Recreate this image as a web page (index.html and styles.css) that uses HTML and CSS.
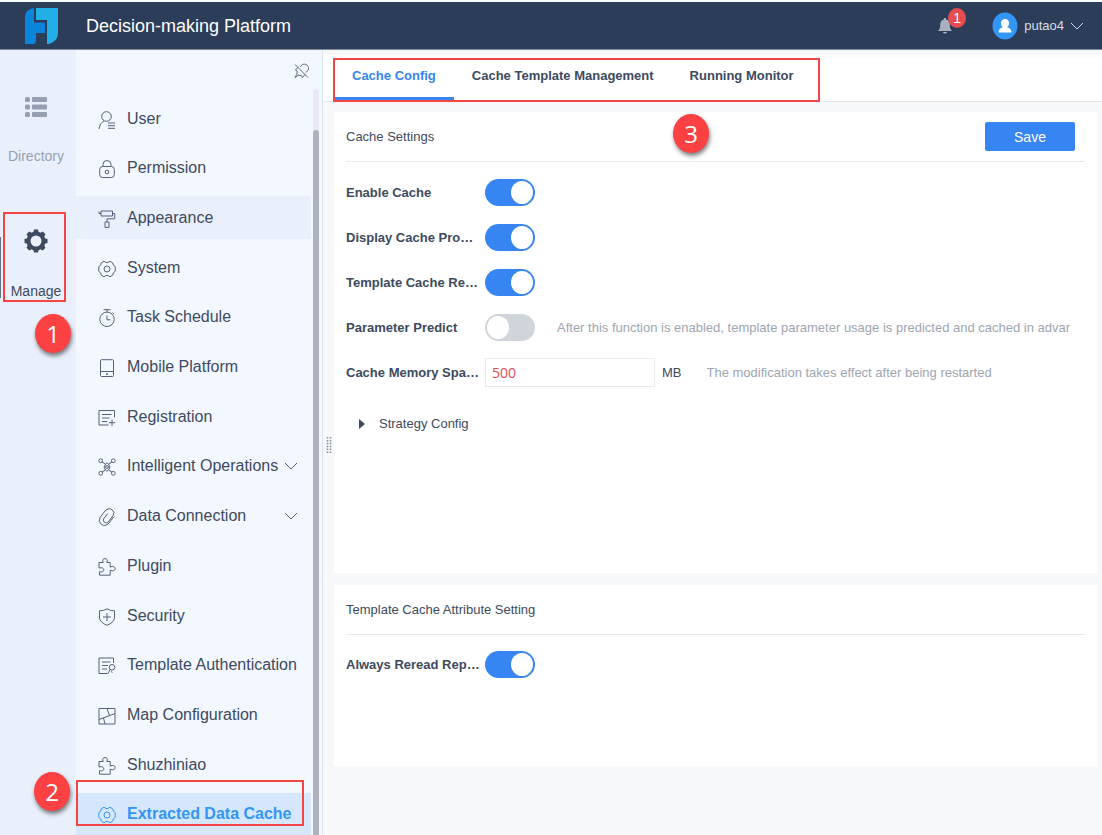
FILE: index.html
```html
<!DOCTYPE html>
<html lang="en">
<head>
<meta charset="utf-8">
<title>Decision-making Platform</title>
<link rel="stylesheet" href="styles.css">
</head>
<body>
<svg class="defs" aria-hidden="true">
  <symbol id="gear" viewBox="0 0 18 18"><path d="M6 1.200Q7.500 2.600 9 2.600T12 1.200L14.800 3Q14.600 5.400 17.200 6.600V11.400Q14.600 12.600 14.800 15L12 16.800Q10.500 15.400 9 15.400T6 16.800L3.200 15Q3.400 12.600.8 11.400V6.600Q3.400 5.400 3.200 3z"/><circle cx="9" cy="9" r="3"/></symbol>
  <symbol id="puzzle" viewBox="0 0 18 18"><path d="M1 4.500h4.200C3.900 1.900 5.300.6 7 .6s3.100 1.300 1.800 3.900h3.400v4.600c2.800-1.400 5-.3 5 1.500s-2.200 3-5 1.600v5H1.500v-3.500c3.300.8 4.300-.5 4.300-1.900S4.600 9.200 1 10z"/></symbol>
  <symbol id="down" viewBox="0 0 14 8"><path d="M1 1l6 6 6-6"/></symbol>
</svg>

<header class="topbar">
  <svg class="logo" viewBox="0 0 33 36" aria-hidden="true">
    <path d="M0 8Q1 1 9 0v14.500h11V25H11v8q0 2-2 3H0z" fill="#0b84dc"/>
    <path d="M11 0h22v25q0 8-9 11h-2V12H11z" fill="#22aee6"/>
  </svg>
  <h1 class="brand">Decision-making Platform</h1>
  <button class="bell" aria-label="Notifications">
    <svg viewBox="0 0 14 16" aria-hidden="true"><path d="M6 0h2v1.500c3 .6 3.800 2.900 3.800 5.500 0 3 .7 4.500 2.200 6H0c1.500-1.500 2.200-3 2.200-6C2.200 4.400 3 2.100 6 1.500zM5 14h4q0 1.500-2 1.500T5 14z"/></svg>
    <span class="count">1</span>
  </button>
  <button class="account">
    <svg class="avatar" viewBox="0 0 26 28" aria-hidden="true"><ellipse cx="13" cy="14" rx="12.500" ry="13.500" fill="#3296f5"/><path d="M13 7c2.800 0 4 2 4 4.200 0 1.800-.9 3.200-2 4 2.800.6 4.500 2 4.500 5.300h-13c0-3.300 1.700-4.700 4.500-5.300-1.100-.8-2-2.200-2-4C9 9 10.200 7 13 7z" fill="#fff"/></svg>
    <span>putao4</span>
    <svg class="chevron" aria-hidden="true"><use href="#down"/></svg>
  </button>
</header>

<div class="layout">
  <nav class="rail" aria-label="Sections">
    <a class="rail-item" href="#directory">
      <svg viewBox="0 0 22 22" aria-hidden="true"><g fill="currentColor"><rect y="1" width="5" height="5" rx="1.500"/><rect x="7" y="1" width="15" height="5" rx="1"/><rect y="8.500" width="5" height="5" rx="1.500"/><rect x="7" y="8.500" width="15" height="5" rx="1"/><rect y="16" width="5" height="5" rx="1.500"/><rect x="7" y="16" width="15" height="5" rx="1"/></g></svg>
      <span>Directory</span>
    </a>
    <a class="rail-item active" href="#manage">
      <svg viewBox="0 0 24 24" aria-hidden="true"><circle cx="12" cy="12" r="7.500" fill="none" stroke="currentColor" stroke-width="4"/><g fill="currentColor"><path id="tooth" d="M10 .5h4l1 4H9z"/><use href="#tooth" transform="rotate(45 12 12)"/><use href="#tooth" transform="rotate(90 12 12)"/><use href="#tooth" transform="rotate(135 12 12)"/><use href="#tooth" transform="rotate(180 12 12)"/><use href="#tooth" transform="rotate(225 12 12)"/><use href="#tooth" transform="rotate(270 12 12)"/><use href="#tooth" transform="rotate(315 12 12)"/></g></svg>
      <span>Manage</span>
    </a>
    <span class="frame frame-manage"></span>
    <span class="step step-1">1</span>
  </nav>

  <aside class="sidebar">
    <div class="pinbar">
      <button class="pin" aria-label="Unpin menu"><svg viewBox="0 0 16 16" aria-hidden="true"><path d="M1 1l14 14M4.500 3.500L1.500 7l2 1-.5 3.500L1 15l3.500-2.500 3.500.5 1 2 3-3.500M6.500 3.500l2.800-2.700q3-.8 5 1.200t1 5L12.500 9.500"/></svg></button>
    </div>
    <ul class="menu">
      <li><a href="#user"><svg viewBox="0 0 18 18"><circle cx="8.500" cy="5.500" r="4.800"/><path d="M6 9.800Q1.500 12 1 18M10 12h7M10 14.700h7M10 17.300h7"/></svg>User</a></li>
      <li><a href="#permission"><svg viewBox="0 0 18 18"><path d="M5 6.500V4.500q0-4 4-4t4 4v2"/><rect x="1.700" y="6.500" width="14.600" height="11" rx="3"/><circle cx="9" cy="12" r="1.800"/></svg>Permission</a></li>
      <li class="hover"><a href="#appearance"><svg viewBox="0 0 18 18"><path d="M3 1h11.500v5H3zM3 3.500H1V1.500M14.500 3.500h2.200v5.300H9V12M7 12h4v5.400H7z"/></svg>Appearance</a></li>
      <li><a href="#system"><svg viewBox="0 0 18 18"><use href="#gear"/></svg>System</a></li>
      <li><a href="#schedule"><svg viewBox="0 0 18 18"><circle cx="9" cy="10.300" r="7.200"/><path d="M5.500.7h7M9 .7V3M9 6.500v4.300h3.500M14.500 3.500L16 5"/></svg>Task Schedule</a></li>
      <li><a href="#mobile"><svg viewBox="0 0 18 18"><rect x="2.500" y=".7" width="13" height="16.800" rx="1"/><path d="M2.500 12.500h13"/><circle cx="9" cy="15" r=".6"/></svg>Mobile Platform</a></li>
      <li><a href="#registration"><svg viewBox="0 0 18 18"><path d="M16.500 8.500V1.500H1v14.500h9.500M4 5.500h9.500M4 9h7.500M4 12.500h5M14 10.500v6.500M11 13.700h6.300"/></svg>Registration</a></li>
      <li><a href="#operations"><svg viewBox="0 0 18 18"><circle cx="2.700" cy="2.700" r="1.900"/><circle cx="15.300" cy="2.700" r="1.900"/><circle cx="2.700" cy="15.300" r="1.900"/><circle cx="15.300" cy="15.300" r="1.900"/><circle cx="9" cy="9" r="1.400"/><path d="M4 4l3.500 2L9 4.700 10.500 6 14 4M4 14l3.500-2L9 13.300l1.500-1.300 3.500 2M7.500 6Q4.500 9 7.500 12M10.500 6q3 3 0 6"/></svg>Intelligent Operations<svg class="chevron"><use href="#down"/></svg></a></li>
      <li><a href="#connection"><svg viewBox="0 0 18 18"><path d="M16 8.500l-5 6.500q-3.800 4-7.500 1.500T2 9.500l5-6.500q3.500-3.700 7-1.300t1 6l-4.500 6q-2 2-4 .7t-.8-3.600l4-5.300"/></svg>Data Connection<svg class="chevron"><use href="#down"/></svg></a></li>
      <li><a href="#plugin"><svg viewBox="0 0 18 18"><use href="#puzzle"/></svg>Plugin</a></li>
      <li><a href="#security"><svg viewBox="0 0 18 18"><path d="M9 .8q3.500 2.200 7.500 2V10q-.5 4.500-7.500 7.300Q2 14.500 1.500 10V2.800Q5.500 3 9 .8zM9 5v8M5 9h8"/></svg>Security</a></li>
      <li><a href="#authentication"><svg viewBox="0 0 18 18"><path d="M15.500 6V1H1v15.500h8M4 5h8.500M4 8.500h6M4 12h5M12.500 12L9.500 17M13 14.500l1.500 1"/><circle cx="14" cy="10.300" r="2.800"/></svg>Template Authentication</a></li>
      <li><a href="#map"><svg viewBox="0 0 18 18"><path d="M1 1.500h16v15.500H1zM1 12.500L17 6.500M9 1.500l2.500 7M5.500 11L7 17"/></svg>Map Configuration</a></li>
      <li><a href="#shuzhiniao"><svg viewBox="0 0 18 18"><use href="#puzzle"/></svg>Shuzhiniao</a></li>
      <li class="current"><a href="#cache" aria-current="page"><svg viewBox="0 0 18 18"><use href="#gear"/></svg>Extracted Data Cache</a></li>
    </ul>
    <span class="scroll-track"><span class="scroll-thumb"></span></span>
    <span class="frame frame-cache"></span>
    <span class="step step-2">2</span>
  </aside>

  <main class="content">
    <nav class="tabs" aria-label="Cache pages">
      <a class="tab selected" href="#config">Cache Config</a>
      <a class="tab" href="#templates">Cache Template Management</a>
      <a class="tab" href="#monitor">Running Monitor</a>
      <span class="frame frame-tabs"></span>
    </nav>
    <svg class="grip" viewBox="0 0 6 16" aria-hidden="true"><path d="M1.500 0v16M4.500 0v16" stroke="#7f8896" stroke-width="1.500" stroke-dasharray="1.500 1.400"/></svg>
    <div class="panels">
      <section class="panel panel-main">
        <div class="panel-head"><h2>Cache Settings</h2><button class="save">Save</button></div>
        <div class="row"><label for="enable">Enable Cache</label><input class="switch" type="checkbox" id="enable" checked></div>
        <div class="row"><label for="display">Display Cache Pro…</label><input class="switch" type="checkbox" id="display" checked></div>
        <div class="row"><label for="reuse">Template Cache Re…</label><input class="switch" type="checkbox" id="reuse" checked></div>
        <div class="row"><label for="predict">Parameter Predict</label><input class="switch" type="checkbox" id="predict"><span class="hint">After this function is enabled, template parameter usage is predicted and cached in advar</span></div>
        <div class="row"><label for="memory">Cache Memory Spa…</label><input class="memory" type="text" id="memory" value="500"><span class="unit">MB</span><span class="hint">The modification takes effect after being restarted</span></div>
        <button class="expander"><svg viewBox="0 0 6 10" aria-hidden="true"><path d="M0 0l6 5-6 5z"/></svg>Strategy Config</button>
        <span class="step step-3">3</span>
      </section>
      <section class="panel panel-attr">
        <div class="panel-head"><h2>Template Cache Attribute Setting</h2></div>
        <div class="row row-attr"><label for="reread">Always Reread Rep…</label><input class="switch" type="checkbox" id="reread" checked></div>
      </section>
    </div>
  </main>
</div>
</body>
</html>
```
FILE: styles.css
```css
* { box-sizing: border-box; }

body {
  margin: 0;
  min-height: 100vh;
  padding-top: 2px;
  display: flex;
  flex-direction: column;
  background: #fff;
  color: #3d4a60;
  font: 14px/20px "Liberation Sans", Arial, sans-serif;
  overflow: hidden;
}

a { color: inherit; text-decoration: none; }
button { padding: 0; border: 0; background: none; color: inherit; font: inherit; }
h1, h2 { margin: 0; font-weight: 400; }
svg { display: block; flex: none; fill: none; }
.defs { position: absolute; width: 0; height: 0; }

/* Top bar */
.topbar {
  display: flex;
  align-items: center;
  height: 48px;
  padding: 0 18px 0 25px;
  background: #2c3d59;
  border-bottom: 1px solid #7f899b;
  color: #d8dde5;
}
.logo { width: 33px; height: 36px; }
.brand { flex: 1; margin-left: 28px; color: #fff; font-size: 18px; }
.bell { position: relative; margin-right: 40px; }
.bell svg { width: 14px; height: 16px; fill: #a9b1bf; }
.count {
  position: absolute;
  left: 10px;
  top: -10px;
  width: 18px;
  height: 20px;
  border-radius: 50%;
  background: #e64c50;
  color: #fff;
}
.account { display: flex; align-items: center; gap: 6px; font-size: 13px; }
.avatar { width: 26px; height: 28px; }
.chevron { width: 14px; height: 8px; stroke: currentColor; }

.layout { flex: 1; display: flex; }

/* Left rail */
.rail {
  position: relative;
  flex: none;
  width: 76px;
  padding-top: 46px;
  background: #e9f0fc;
}
.rail-item {
  display: flex;
  flex-direction: column;
  align-items: center;
  gap: 28px;
  height: 133px;
  padding-right: 4px;
  color: #96a0b2;
}
.rail-item svg { width: 22px; height: 22px; }
.rail-item.active { color: #3d4a60; }
.rail-item.active svg { width: 24px; height: 24px; }
.rail::before {
  content: "";
  position: absolute;
  left: 0;
  top: 187px;
  width: 1px;
  height: 61px;
  background: #66738a;
}

/* Menu */
.sidebar {
  position: relative;
  flex: none;
  display: flex;
  flex-direction: column;
  width: 247px;
  padding-right: 11px;
  background: #f3f7ff;
  border-right: 1px solid #dde3ec;
}
.pinbar {
  display: flex;
  justify-content: flex-end;
  align-items: flex-start;
  height: 47px;
  padding: 13px 2px 0 0;
}
.pin svg { width: 15px; height: 16px; stroke: #56617a; }
.menu {
  flex: 1;
  display: flex;
  flex-direction: column;
  justify-content: space-between;
  margin: 0 0 -1px;
  padding: 0;
  list-style: none;
  font-size: 16px;
}
.menu a {
  display: flex;
  align-items: center;
  height: 43px;
  padding: 0 13px 0 22px;
  white-space: nowrap;
}
.menu a > svg { width: 18px; height: 18px; margin: 2px 11px 0 0; stroke: #56617a; overflow: visible; }
.menu a > .chevron { width: 14px; height: 8px; margin: 0 0 0 auto; }
.menu .hover { background: #e9f0fc; }
.menu .current { background: #d6e7fd; color: #3296f5; font-weight: 700; }
.menu .current svg { stroke: #3296f5; }
.scroll-track {
  position: absolute;
  top: 39px;
  right: 3px;
  bottom: 0;
  width: 6px;
  padding-top: 41px;
  border-radius: 3px 3px 0 0;
  background: #e8e9f3;
}
.scroll-thumb { display: block; height: 100%; border-radius: 3px 3px 0 0; background: #afb2bf; }

/* Content */
.content {
  position: relative;
  flex: 1;
  min-width: 0;
  display: flex;
  flex-direction: column;
  background: #f6f8fa;
  font-size: 13px;
}
.tabs {
  position: relative;
  display: flex;
  height: 52px;
  padding-left: 11px;
  background: linear-gradient(#f5f5f5, #fff 10px);
  border-bottom: 1px solid #e6e8eb;
  font-weight: 700;
}
.tab { padding: 16px 18px 0; }
.tab.selected { border-bottom: 4px solid #3685f2; color: #3685f2; }
.grip { position: absolute; left: 3px; top: 387px; width: 6px; height: 16px; }
.panels { display: flex; flex-direction: column; gap: 12px; padding: 10px 5px 0 11px; }
.panel { position: relative; padding: 0 12px; background: #fff; }
.panel-main { min-height: 461px; }
.panel-attr { min-height: 181px; }
.panel-head {
  display: flex;
  align-items: center;
  justify-content: space-between;
  height: 50px;
  margin-bottom: 8px;
  padding-right: 10px;
  border-bottom: 1px solid #e9ebee;
}
.panel-head h2 { font-size: 13px; }
.save { width: 90px; height: 29px; border-radius: 2px; background: #3685f2; color: #fff; font-size: 14px; }
.row { display: flex; align-items: center; height: 45px; white-space: nowrap; overflow: hidden; }
.row-attr { height: 43px; }
.row label { flex: none; width: 139px; font-weight: 700; }
.switch {
  appearance: none;
  flex: none;
  width: 50px;
  height: 27px;
  margin: 0;
  padding: 2px;
  border-radius: 14px;
  background: #d0d4db;
}
.switch::before {
  content: "";
  display: block;
  width: 22px;
  height: 23px;
  border-radius: 50%;
  background: #fff;
}
.switch:checked { background: #3685f2; }
.switch:checked::before { margin-left: 24px; }
.hint { min-width: 0; margin-left: 22px; overflow: hidden; color: #9ea5b1; }
.unit { margin: 0 3px 0 7px; }
.memory {
  width: 170px;
  height: 29px;
  padding: 0 6px;
  border: 1px solid #e9ebee;
  background: #fff;
  color: #e64c50;
  font: 14px "Open Sans", sans-serif;
}
.expander { display: flex; align-items: center; gap: 14px; margin: 19px 0 0 13px; }
.expander svg { width: 6px; height: 10px; fill: #3d4a60; }

/* Numbered callouts over the page */
.frame { position: absolute; border: 2px solid #f54545; pointer-events: none; }
.frame-manage { left: 3px; top: 162px; width: 63px; height: 90px; }
.frame-cache { left: 0; bottom: 9px; width: 228px; height: 46px; }
.frame-tabs { left: 10px; top: 8px; width: 487px; height: 44px; }
.step {
  position: absolute;
  width: 36px;
  height: 39px;
  border-radius: 50%;
  background: #fc4143;
  box-shadow: 1px 3px 4px rgba(0, 0, 0, 0.5);
  color: #fff;
  font: 24px/39px "Open Sans", sans-serif;
  text-align: center;
}
.step-1 { left: 35px; top: 264px; }
.step-2 { left: -42px; bottom: 24px; }
.step-3 { left: 339px; top: 2px; }
```
